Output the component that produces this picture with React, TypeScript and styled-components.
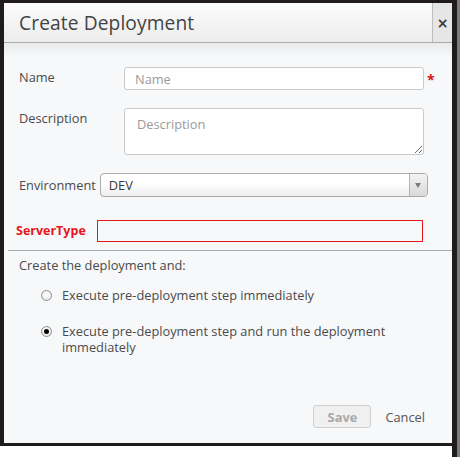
import React from 'react';
import styled, { createGlobalStyle } from 'styled-components';

const GlobalStyle = createGlobalStyle`
  html, body {
    margin: 0;
    padding: 0;
    background: #ffffff;
  }
  body {
    font-family: "Open Sans", "Noto Sans", Arial, sans-serif;
    color: #4a4a4a;
  }
`;

const Screen = styled.div`
  display: flex;
  align-items: flex-start;
  height: 457px;
  width: 466px;
  overflow: hidden;
`;

const Frame = styled.div`
  width: 448px;
  height: 440px;
  border-top: 3px solid #1f1b1b;
  border-left: 4px solid #1f1b1b;
  border-bottom: 3px solid #1f1b1b;
  background: #f7f8fa;
  display: flex;
  flex-direction: column;
`;

const Edge = styled.div`
  width: 5px;
  height: 457px;
  background: #1f1b1b;
  border-right: 3px solid #7b7b7b;
`;

const Header = styled.div`
  height: 39px;
  display: flex;
  align-items: stretch;
  border-bottom: 1px solid #a9a9a9;
  background: linear-gradient(#fbfbfb, #ececec);
`;

const Title = styled.h1`
  flex: 1;
  margin: 0;
  padding-left: 15px;
  display: flex;
  align-items: center;
  font-size: 19.2px;
  font-weight: 400;
  color: #444;
  letter-spacing: 0.1px;
`;

const CloseButton = styled.button`
  width: 20px;
  border: none;
  border-left: 1px solid #bdbdbd;
  background: #e6e6e6;
  color: #3d3d3d;
  font-family: "DejaVu Sans", sans-serif;
  font-size: 14px;
  font-weight: 700;
  padding: 0;
  padding-top: 1px;
  cursor: pointer;
`;

const Body = styled.div`
  flex: 1;
  display: flex;
  flex-direction: column;
  background: linear-gradient(#e9eaec 0px, #f7f8fa 14px);
`;

const Row = styled.div<{ $top: number; $left?: number }>`
  display: flex;
  align-items: flex-start;
  margin-top: ${p => p.$top}px;
  padding-left: ${p => p.$left ?? 15}px;
`;

const Label = styled.label<{ $width?: number; $pad?: number }>`
  width: ${p => (p.$width ? `${p.$width}px` : 'auto')};
  padding-top: ${p => p.$pad ?? 0}px;
  font-size: 12.8px;
  line-height: 16px;
  color: #4a4a4a;
  flex-shrink: 0;
`;

const TextInput = styled.input`
  box-sizing: border-box;
  width: 300px;
  height: 23px;
  border: 1px solid #c9c9c9;
  border-radius: 3px;
  background: #fff;
  padding: 0 10px;
  font-family: inherit;
  font-size: 12.8px;
  color: #444;
  outline: none;
  &::placeholder {
    color: #9a9a9a;
  }
`;

const Required = styled.span`
  color: #e01010;
  font-size: 14px;
  font-weight: 700;
  line-height: 23px;
  margin-left: 3px;
  padding-top: 1px;
`;

const TextArea = styled.textarea`
  box-sizing: border-box;
  width: 300px;
  height: 47px;
  border: 1px solid #c9c9c9;
  border-radius: 3px;
  background: #fff;
  padding: 6px 12px;
  font-family: inherit;
  font-size: 12.8px;
  color: #444;
  outline: none;
  &::placeholder {
    color: #9a9a9a;
  }
`;

const Select = styled.div`
  box-sizing: border-box;
  width: 328px;
  height: 24px;
  margin-left: 4px;
  border: 1px solid #ababab;
  border-radius: 4px;
  background: linear-gradient(#ffffff 40%, #eeeeee);
  display: flex;
  align-items: stretch;
  overflow: hidden;
`;

const SelectValue = styled.span`
  flex: 1;
  padding-left: 8px;
  font-size: 12.8px;
  line-height: 22px;
  color: #3a3a3a;
`;

const SelectArrow = styled.span`
  width: 17px;
  border-left: 1px solid #b5b5b5;
  background: linear-gradient(#f3f3f3, #d9d9d9);
  display: flex;
  align-items: center;
  justify-content: center;
  &::after {
    content: '';
    border-left: 3.5px solid transparent;
    border-right: 3.5px solid transparent;
    border-top: 5px solid #7a7a7a;
    margin-top: 1px;
  }
`;

const AlertLabel = styled.span`
  width: 81px;
  font-family: "Open Sans", "Noto Sans", sans-serif;
  font-size: 12.5px;
  font-weight: 700;
  color: #e4161c;
  line-height: 16px;
  padding-top: 3px;
`;

const AlertBox = styled.div`
  box-sizing: border-box;
  width: 326px;
  height: 22px;
  border: 1px solid #e4161c;
`;

const Divider = styled.hr`
  margin: 8px 0 0 4px;
  border: none;
  border-top: 1px solid #ababab;
  height: 0;
`;

const Lead = styled.p`
  margin: 6px 0 0 15px;
  font-size: 12.8px;
  line-height: 16px;
  color: #4a4a4a;
`;

const Option = styled.label<{ $top: number }>`
  display: flex;
  align-items: flex-start;
  gap: 10px;
  margin-top: ${p => p.$top}px;
  padding-left: 37px;
  width: 365px;
  font-size: 12.8px;
  line-height: 16px;
  color: #4a4a4a;
`;

const Radio = styled.input`
  appearance: none;
  flex-shrink: 0;
  width: 11px;
  height: 11px;
  margin: 3px 0 0 0;
  border: 1px solid #8e8e8e;
  border-radius: 50%;
  background: radial-gradient(circle at 50% 40%, #ffffff, #e4e4e4);
  box-sizing: border-box;
  display: grid;
  place-items: center;
  &:checked::after {
    content: '';
    width: 5px;
    height: 5px;
    border-radius: 50%;
    background: #000;
  }
`;

const Footer = styled.div`
  margin-top: auto;
  margin-bottom: 15px;
  padding-right: 27px;
  display: flex;
  justify-content: flex-end;
  align-items: center;
  gap: 14px;
`;

const SaveButton = styled.button`
  box-sizing: border-box;
  width: 58px;
  height: 23px;
  border: 1px solid #cfcfcf;
  border-radius: 3px;
  background: #f0f0f0;
  color: #a8a8a8;
  font-family: inherit;
  font-size: 12.8px;
  font-weight: 700;
  padding: 0;
`;

const CancelLink = styled.span`
  font-size: 12.8px;
  color: #555;
`;

export default function App() {
  return (
    <>
      <GlobalStyle />
      <Screen>
        <Frame>
          <Header>
            <Title>Create Deployment</Title>
            <CloseButton aria-label="close">×</CloseButton>
          </Header>
          <Body>
            <Row $top={24}>
              <Label $width={105} $pad={2}>Name</Label>
              <TextInput placeholder="Name" />
              <Required>*</Required>
            </Row>
            <Row $top={17}>
              <Label $width={105} $pad={2}>Description</Label>
              <TextArea placeholder="Description" />
            </Row>
            <Row $top={18}>
              <Label $pad={4}>Environment</Label>
              <Select>
                <SelectValue>DEV</SelectValue>
                <SelectArrow />
              </Select>
            </Row>
            <Row $top={23} $left={12}>
              <AlertLabel>ServerType</AlertLabel>
              <AlertBox />
            </Row>
            <Divider />
            <Lead>Create the deployment and:</Lead>
            <Option $top={14}>
              <Radio type="radio" name="mode" />
              <span>Execute pre-deployment step immediately</span>
            </Option>
            <Option $top={20}>
              <Radio type="radio" name="mode" defaultChecked />
              <span>Execute pre-deployment step and run the deployment immediately</span>
            </Option>
            <Footer>
              <SaveButton disabled>Save</SaveButton>
              <CancelLink>Cancel</CancelLink>
            </Footer>
          </Body>
        </Frame>
        <Edge />
      </Screen>
    </>
  );
}
